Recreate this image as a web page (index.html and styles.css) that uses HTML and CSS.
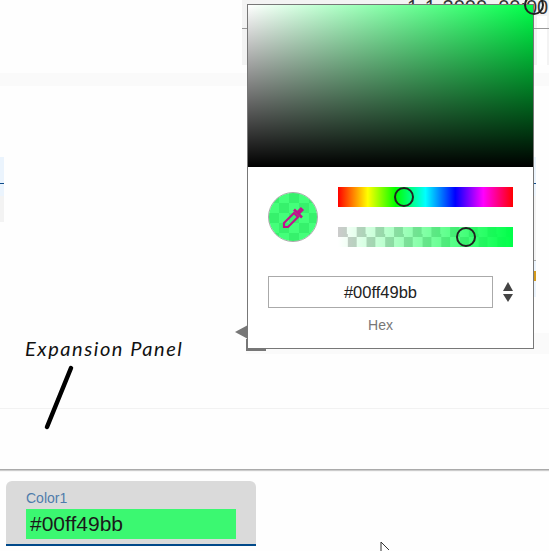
FILE: index.html
```html
<!DOCTYPE html>
<html lang="en">
<head>
    <meta charset="UTF-8">
    <meta name="viewport" content="width=device-width, initial-scale=1.0">
    <title>Color Picker</title>
    <link rel="stylesheet" href="styles.css">
</head>
<body>

<div class="page">
    <!-- Page behind the picker -->
    <div class="top-row">
        <div class="top-blank"></div>
        <div class="top-field">
            <div class="date-value">1-1-2000, 00:00</div>
            <div class="date-gap"></div>
            <div class="date-rest"></div>
        </div>
    </div>
    <div class="band"></div>
    <div class="table-area">
        <div class="edge-left">
            <div class="cell-selected"></div>
            <div class="cell-plain"></div>
        </div>
        <div class="edge-right">
            <div class="cell-selected"></div>
            <div class="cell-tall"></div>
            <div class="cell-status"><span class="status-mark"></span></div>
        </div>
    </div>
    <div class="under-popup"></div>

    <div class="panel-body"></div>

    <div class="field">
        <label class="field-label">Color1</label>
        <div class="field-value">#00ff49bb</div>
    </div>

    <!-- Hand written note -->
    <div class="note">Expansion Panel</div>
    <svg class="note-line" width="40" height="72" viewBox="0 0 40 72">
        <line x1="31" y1="6" x2="7" y2="65" stroke="#000" stroke-width="4.5" stroke-linecap="round"/>
    </svg>

    <!-- Color picker popup -->
    <div class="picker-arrow"></div>
    <div class="picker">
        <div class="saturation"></div>
        <div class="picker-body">
            <div class="controls">
                <div class="preview">
                    <div class="preview-color">
                        <svg width="26" height="26" viewBox="0 0 26 26">
                            <path d="M4 19 L14 9 L18 13 L8 23 L4 23 Z" fill="none" stroke="#c0128c" stroke-width="2.2"/>
                            <path d="M14 5.5 L22 13.5" stroke="#c0128c" stroke-width="2.6" fill="none"/>
                            <path d="M18 9 L22.5 4.5" stroke="#c0128c" stroke-width="4.5" fill="none"/>
                        </svg>
                    </div>
                </div>
                <div class="sliders">
                    <div class="slider hue"><span class="thumb hue-thumb"></span></div>
                    <div class="slider alpha"><span class="thumb alpha-thumb"></span></div>
                </div>
            </div>
            <div class="hex-row">
                <div class="hex-col">
                    <div class="hex-input">#00ff49bb</div>
                    <div class="hex-label">Hex</div>
                </div>
                <div class="hex-switch">
                    <span class="tri-up"></span>
                    <span class="tri-down"></span>
                </div>
            </div>
        </div>
    </div>
    <div class="thumb sat-thumb"></div>

    <svg class="mouse" width="12" height="10" viewBox="0 0 12 10">
        <path d="M1 0 L1 9 M1 0 L9 8" stroke="#333" stroke-width="1" fill="none"/>
    </svg>
</div>

</body>
</html>
```

FILE: styles.css
```css
html, body {
    margin: 0;
    padding: 0;
    overflow: hidden;
}
body {
    font-family: "Liberation Sans", Arial, sans-serif;
    background-color: #fefefe;
}
.page {
    position: relative;
    width: 549px;
    height: 551px;
    overflow: hidden;
}
.top-row {
    display: flex;
    height: 65px;
}
.top-blank {
    width: 242px;
}
.top-field {
    flex: 1;
    position: relative;
    display: flex;
    background-color: #f3f3f3;
    overflow: hidden;
}
.top-field::after {
    content: "";
    position: absolute;
    left: 0;
    right: 0;
    top: 28px;
    height: 1px;
    background-color: #999;
}
.date-value {
    position: absolute;
    left: 165px;
    top: -4px;
    font-size: 20px;
    line-height: 23px;
    color: #333;
    white-space: nowrap;
}
.date-gap {
    width: 295px;
}
.date-rest {
    width: 10px;
    margin-top: 16px;
    background-color: #fff;
}
.band {
    height: 13px;
    margin-top: 8px;
    background-color: #fafafa;
}
.table-area {
    display: flex;
    justify-content: space-between;
    height: 322px;
    padding: 71px 13px 0 0;
    box-sizing: border-box;
}
.edge-left {
    width: 4px;
}
.edge-right {
    width: 3px;
}
.cell-selected {
    height: 39px;
    background: linear-gradient(to bottom, #ebf4fd 26px, #0f4c8a 26px, #0f4c8a 27px, #ebf4fd 27px);
}
.cell-plain {
    height: 26px;
    background-color: #f3f3f3;
}
.cell-tall {
    height: 64px;
    background-color: #f3f3f3;
    border-bottom: 1px solid #aaa;
}
.cell-status {
    height: 36px;
    padding-top: 10px;
    box-sizing: border-box;
    background-color: #ebf4fd;
}
.status-mark {
    display: block;
    width: 2px;
    height: 10px;
    margin-left: 1px;
    background-color: #d49a1c;
}
.under-popup {
    position: absolute;
    left: 246px;
    top: 333px;
    width: 303px;
    height: 21px;
    background-color: #fafafa;
}
.panel-body {
    height: 60px;
    border-top: 1px solid #f2f2f2;
    border-bottom: 1px solid #aaa;
    box-shadow: 0 1px 1px #ccc;
}
.field {
    width: 250px;
    height: 65px;
    margin: 11px 0 0 6px;
    padding: 9px 20px 0;
    box-sizing: border-box;
    background-color: #dadada;
    border-radius: 6px 6px 0 0;
    border-bottom: 2px solid #00498a;
}
.field-label {
    display: block;
    font-size: 14px;
    line-height: 16px;
    color: #4f7cab;
}
.field-value {
    height: 30px;
    margin-top: 3px;
    padding-left: 4px;
    font-size: 21px;
    line-height: 30px;
    color: #1a1a1a;
    background-color: #3bf871;
}
.note {
    position: absolute;
    left: 25px;
    top: 336px;
    font-family: Lato, sans-serif;
    font-style: italic;
    font-size: 20px;
    line-height: 24px;
    letter-spacing: 1.55px;
    color: #111;
}
.note-line {
    position: absolute;
    left: 40px;
    top: 362px;
}
.picker {
    position: absolute;
    left: 247px;
    top: 4px;
    width: 287px;
    height: 345px;
    box-sizing: border-box;
    border: 1px solid #777;
    background-color: #fff;
}
.picker-arrow {
    position: absolute;
    left: 235px;
    top: 325px;
    width: 0;
    height: 0;
    border-top: 7px solid transparent;
    border-bottom: 7px solid transparent;
    border-right: 13px solid #777;
}
.picker-arrow::after {
    content: "";
    position: absolute;
    left: 11px;
    top: 7px;
    width: 18px;
    height: 10px;
    border-left: 2px solid #777;
    border-bottom: 2px solid #777;
}
.saturation {
    height: 162px;
    background:
        linear-gradient(to bottom, rgba(0, 0, 0, 0), #000),
        linear-gradient(to right, #fff, #00ff49);
}
.picker-body {
    padding: 20px 20px 0;
}
.controls {
    display: flex;
    align-items: center;
    height: 60px;
}
.preview {
    width: 50px;
    height: 50px;
    box-sizing: border-box;
    border: 1px solid #aaa;
    border-radius: 50%;
    overflow: hidden;
    background: repeating-conic-gradient(#fff 0 25%, #ccc 0 50%) 0 0 / 20px 20px;
}
.preview-color {
    display: flex;
    align-items: center;
    justify-content: center;
    height: 100%;
    background-color: #00ff49bb;
}
.sliders {
    flex: 1;
    display: flex;
    flex-direction: column;
    gap: 20px;
    margin-left: 20px;
}
.slider {
    position: relative;
    height: 20px;
}
.hue {
    background: linear-gradient(to right, #f00, #ff0 17%, #0f0 33%, #0ff 50%, #00f 67%, #f0f 83%, #f00);
}
.alpha {
    background:
        linear-gradient(to right, rgba(0, 255, 73, 0), #00ff49),
        repeating-conic-gradient(#fff 0 25%, #ccc 0 50%) 0 0 / 18.7px 20px;
}
.thumb {
    position: absolute;
    width: 20px;
    height: 20px;
    box-sizing: border-box;
    border: 2px solid #222;
    border-radius: 50%;
}
.hue-thumb {
    left: 56px;
    top: 0;
}
.alpha-thumb {
    left: 118px;
    top: 0;
}
.sat-thumb {
    left: 524px;
    top: -5px;
}
.hex-row {
    display: flex;
    margin-top: 29px;
}
.hex-col {
    width: 225px;
}
.hex-input {
    height: 32px;
    box-sizing: border-box;
    border: 1px solid #aaa;
    font-size: 16.5px;
    line-height: 30px;
    text-align: center;
    color: #222;
}
.hex-label {
    margin-top: 9px;
    font-size: 14px;
    line-height: 16px;
    text-align: center;
    color: #777;
}
.hex-switch {
    display: flex;
    flex-direction: column;
    gap: 3px;
    margin: 6px 0 0 10px;
}
.tri-up, .tri-down {
    width: 0;
    height: 0;
    border-left: 5px solid transparent;
    border-right: 5px solid transparent;
}
.tri-up {
    border-bottom: 9px solid #444;
}
.tri-down {
    border-top: 8px solid #444;
}
.mouse {
    position: absolute;
    left: 380px;
    top: 542px;
}
```
